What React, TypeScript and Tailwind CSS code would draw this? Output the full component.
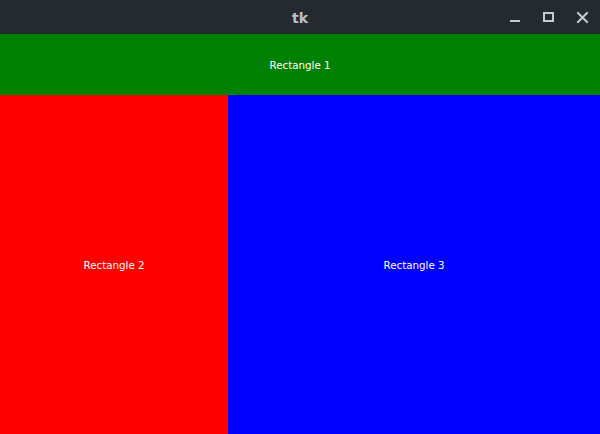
import React from 'react';

const font = { fontFamily: '"DejaVu Sans", "Liberation Sans", sans-serif' };

const TitleBar: React.FC = () => (
  <div className="relative h-[34px] shrink-0 bg-[#252a30] flex items-center justify-center">
    <span className="text-[14px] font-bold text-[#bac2ca] leading-none mt-[1px]" style={font}>
      tk
    </span>
    {/* window buttons */}
    <div className="absolute right-0 top-0 h-full flex items-center">
      <svg width="34" height="34" viewBox="0 0 34 34">
        <rect x="10" y="20" width="10" height="2" fill="#c3cad1" />
      </svg>
      <svg width="34" height="34" viewBox="0 0 34 34">
        <rect x="10" y="13" width="9" height="8" fill="none" stroke="#c3cad1" strokeWidth="2" />
      </svg>
      <svg width="32" height="34" viewBox="0 0 32 34">
        <path d="M10 13 L19 22 M19 13 L10 22" stroke="#c3cad1" strokeWidth="2" strokeLinecap="square" />
      </svg>
    </div>
  </div>
);

const App: React.FC = () => {
  return (
    <div className="w-[600px] h-[434px] flex flex-col overflow-hidden" style={font}>
      <TitleBar />
      <div className="h-[61px] shrink-0 bg-[#008000] flex items-center justify-center">
        <span className="text-[10.3px] text-white mt-[2px]">Rectangle 1</span>
      </div>
      <div className="flex-1 flex min-h-0">
        <div className="w-[228px] bg-[#ff0000] flex items-center justify-center">
          <span className="text-[10.3px] text-white mt-[2px]">Rectangle 2</span>
        </div>
        <div className="flex-1 bg-[#0000ff] flex items-center justify-center">
          <span className="text-[10.3px] text-white mt-[2px]">Rectangle 3</span>
        </div>
      </div>
    </div>
  );
};

export default App;
